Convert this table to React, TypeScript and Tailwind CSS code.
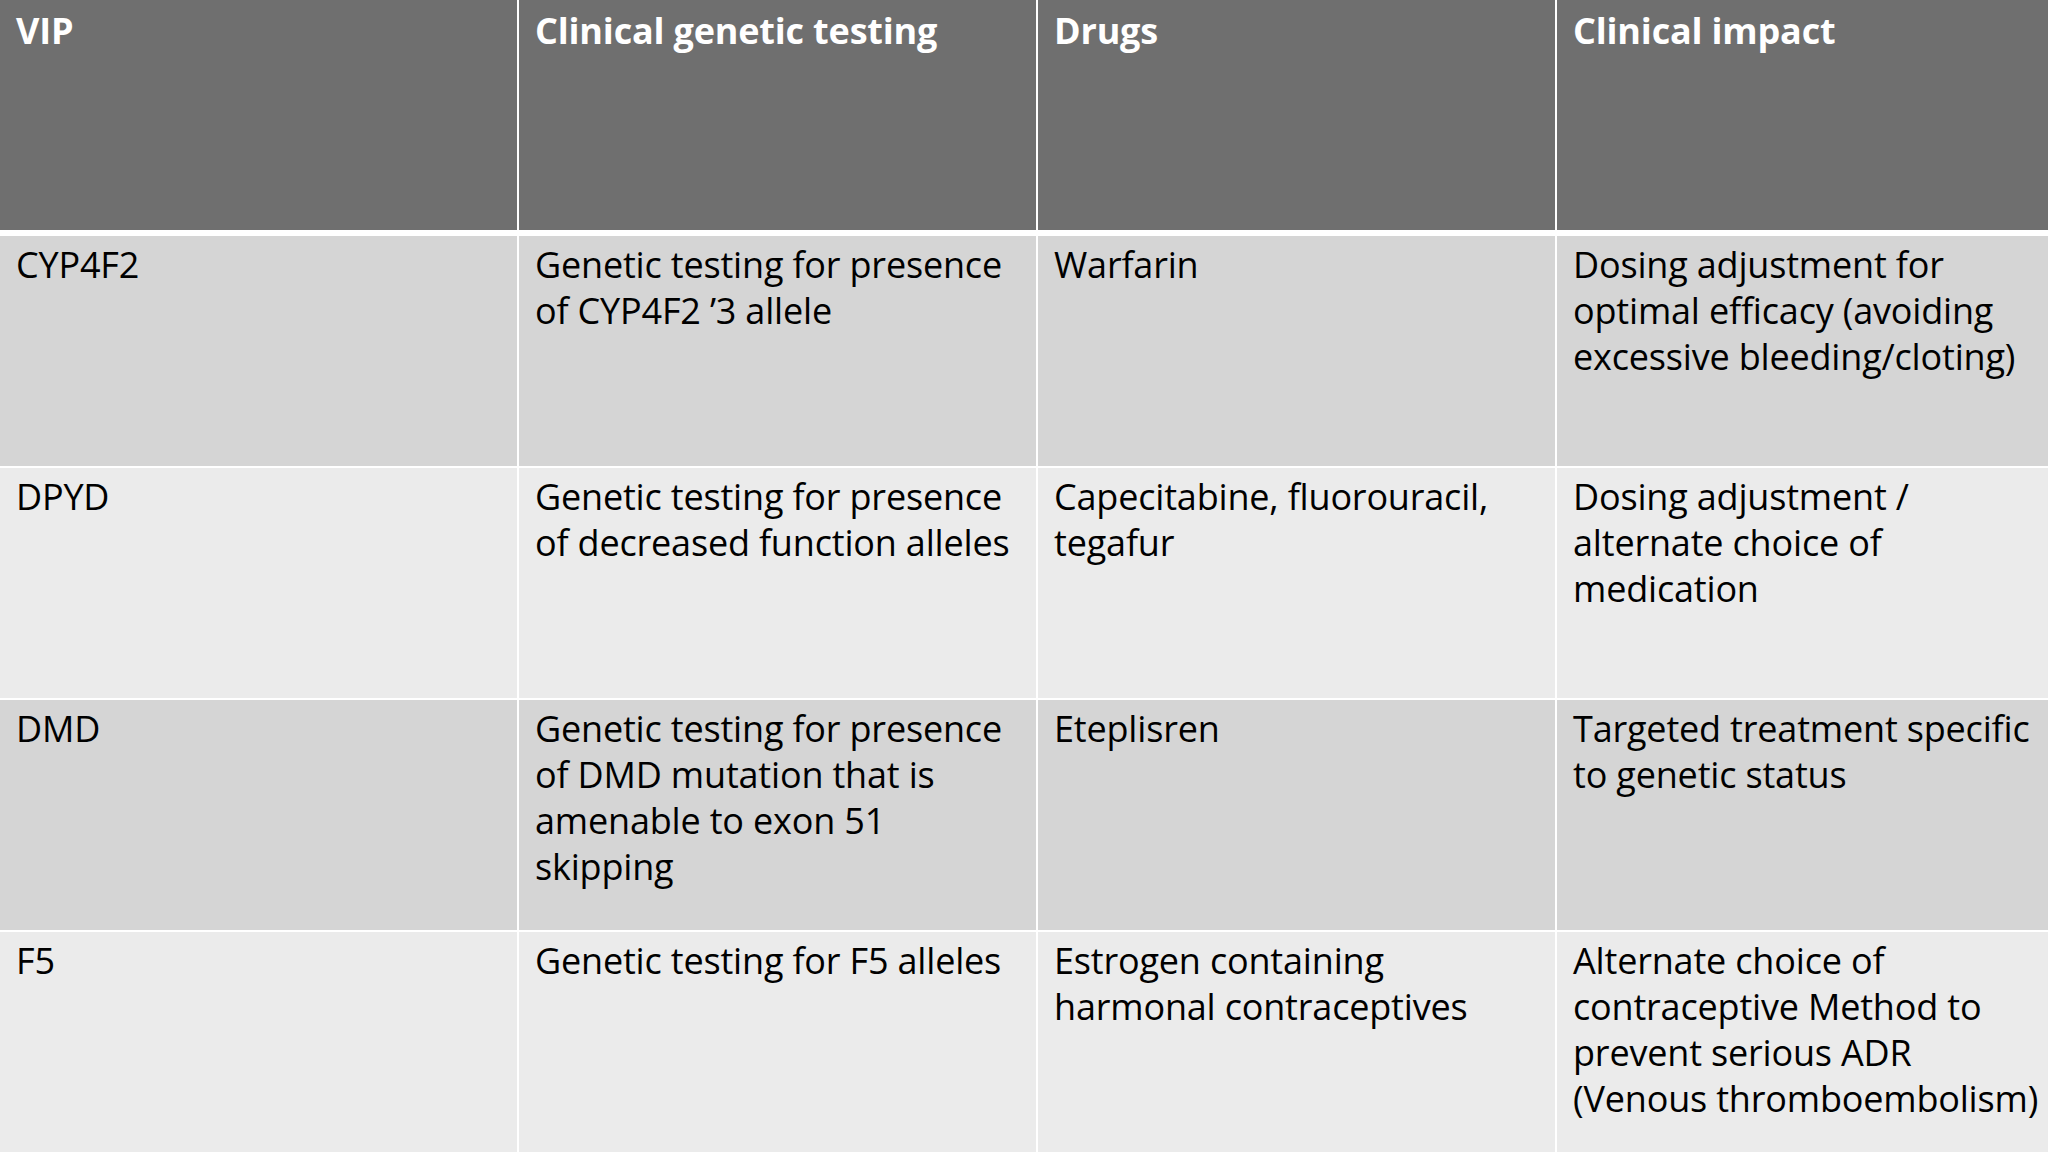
import React from 'react'

type Row = { vip: string[]; testing: string[]; drugs: string[]; impact: string[] }

const rows: Row[] = [
  {
    vip: ['CYP4F2'],
    testing: ['Genetic testing for presence', 'of CYP4F2 \u20193 allele'],
    drugs: ['Warfarin'],
    impact: ['Dosing adjustment for', 'optimal efficacy (avoiding', 'excessive bleeding/cloting)'],
  },
  {
    vip: ['DPYD'],
    testing: ['Genetic testing for presence', 'of decreased function alleles'],
    drugs: ['Capecitabine, fluorouracil,', 'tegafur'],
    impact: ['Dosing adjustment /', 'alternate choice of', 'medication'],
  },
  {
    vip: ['DMD'],
    testing: ['Genetic testing for presence', 'of DMD mutation that is', 'amenable to exon 51', 'skipping'],
    drugs: ['Eteplisren'],
    impact: ['Targeted treatment specific', 'to genetic status'],
  },
  {
    vip: ['F5'],
    testing: ['Genetic testing for F5 alleles'],
    drugs: ['Estrogen containing', 'harmonal contraceptives'],
    impact: ['Alternate choice of', 'contraceptive Method to', 'prevent serious ADR', '(Venous thromboembolism)'],
  },
]

const headers = ['VIP', 'Clinical genetic testing', 'Drugs', 'Clinical impact']

const Cell: React.FC<{ lines: string[]; className?: string }> = ({ lines, className }) => (
  <div className={`px-[16px] pt-[6px] ${className ?? ''}`}>
    {lines.map((l, i) => (
      <div key={i} className="whitespace-nowrap">
        {l}
      </div>
    ))}
  </div>
)

export default function App() {
  return (
    <div
      className="w-[2048px] h-[1152px] overflow-hidden bg-white text-[36px] leading-[46px] tracking-[-0.005em]"
      style={{ fontFamily: '"Open Sans", "Noto Sans", sans-serif' }}
    >
      {/* header */}
      <div className="grid grid-cols-[517px_517px_517px_1fr] gap-x-[2px] h-[230px]">
        {headers.map((h) => (
          <div key={h} className="bg-[#6f6f6f] text-white font-bold px-[16px] pt-[8px]">
            {h}
          </div>
        ))}
      </div>

      {/* body */}
      <div className="flex flex-col gap-[2px] mt-[6px]">
        {rows.map((r, i) => {
          const bg = i % 2 === 0 ? 'bg-[#d5d5d5]' : 'bg-[#ebebeb]'
          return (
            <div key={i} className="grid grid-cols-[517px_517px_517px_1fr] gap-x-[2px] h-[230px] text-black">
              <Cell lines={r.vip} className={bg} />
              <Cell lines={r.testing} className={bg} />
              <Cell lines={r.drugs} className={bg} />
              <Cell lines={r.impact} className={bg} />
            </div>
          )
        })}
      </div>
    </div>
  )
}
